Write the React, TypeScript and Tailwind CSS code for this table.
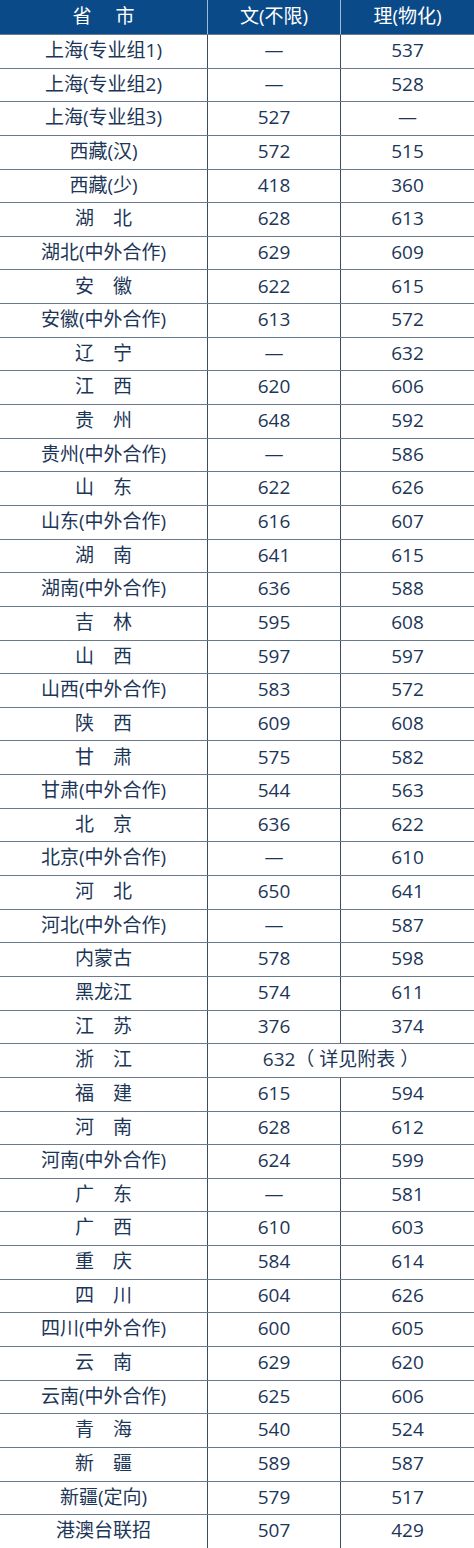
const rows: [string, string, string][] = [
  ['上海(专业组1)', '—', '537'],
  ['上海(专业组2)', '—', '528'],
  ['上海(专业组3)', '527', '—'],
  ['西藏(汉)', '572', '515'],
  ['西藏(少)', '418', '360'],
  ['湖　北', '628', '613'],
  ['湖北(中外合作)', '629', '609'],
  ['安　徽', '622', '615'],
  ['安徽(中外合作)', '613', '572'],
  ['辽　宁', '—', '632'],
  ['江　西', '620', '606'],
  ['贵　州', '648', '592'],
  ['贵州(中外合作)', '—', '586'],
  ['山　东', '622', '626'],
  ['山东(中外合作)', '616', '607'],
  ['湖　南', '641', '615'],
  ['湖南(中外合作)', '636', '588'],
  ['吉　林', '595', '608'],
  ['山　西', '597', '597'],
  ['山西(中外合作)', '583', '572'],
  ['陕　西', '609', '608'],
  ['甘　肃', '575', '582'],
  ['甘肃(中外合作)', '544', '563'],
  ['北　京', '636', '622'],
  ['北京(中外合作)', '—', '610'],
  ['河　北', '650', '641'],
  ['河北(中外合作)', '—', '587'],
  ['内蒙古', '578', '598'],
  ['黑龙江', '574', '611'],
  ['江　苏', '376', '374'],
  ['浙　江', '632（ 详见附表 ）', ''],
  ['福　建', '615', '594'],
  ['河　南', '628', '612'],
  ['河南(中外合作)', '624', '599'],
  ['广　东', '—', '581'],
  ['广　西', '610', '603'],
  ['重　庆', '584', '614'],
  ['四　川', '604', '626'],
  ['四川(中外合作)', '600', '605'],
  ['云　南', '629', '620'],
  ['云南(中外合作)', '625', '606'],
  ['青　海', '540', '524'],
  ['新　疆', '589', '587'],
  ['新疆(定向)', '579', '517'],
  ['港澳台联招', '507', '429'],
];

export default function App() {
  return (
    <div
      className="w-[474px] h-[1548px] bg-white text-[#1c3657] text-[19px] overflow-hidden"
      style={{ fontFamily: '"Open Sans", "Noto Sans CJK SC", sans-serif' }}
    >
      <div className="grid grid-cols-[208px_133px_133px] h-[34px] bg-[#0b4a88] text-white">
        <div className="flex items-center justify-center pb-[2px] border-r border-[#9fb8d6]">省　 市</div>
        <div className="flex items-center justify-center pb-[2px] border-r border-[#9fb8d6]">文(不限)</div>
        <div className="flex items-center justify-center pb-[2px]">理(物化)</div>
      </div>
      {rows.map(([p, a, b]) => (
        <div key={p} className="grid grid-cols-[208px_133px_133px] h-[33.65px] border-t border-[#6b7a8a]">
          <div className="flex items-center justify-center pb-[2px] border-r border-[#3d4d5f]">{p}</div>
          {b === '' ? (
            <div className="col-span-2 flex items-center justify-center pb-[2px] whitespace-pre">{a}</div>
          ) : (
            <>
              <div className="flex items-center justify-center pb-[2px] border-r border-[#3d4d5f]">{a}</div>
              <div className="flex items-center justify-center pb-[2px]">{b}</div>
            </>
          )}
        </div>
      ))}
    </div>
  );
}
